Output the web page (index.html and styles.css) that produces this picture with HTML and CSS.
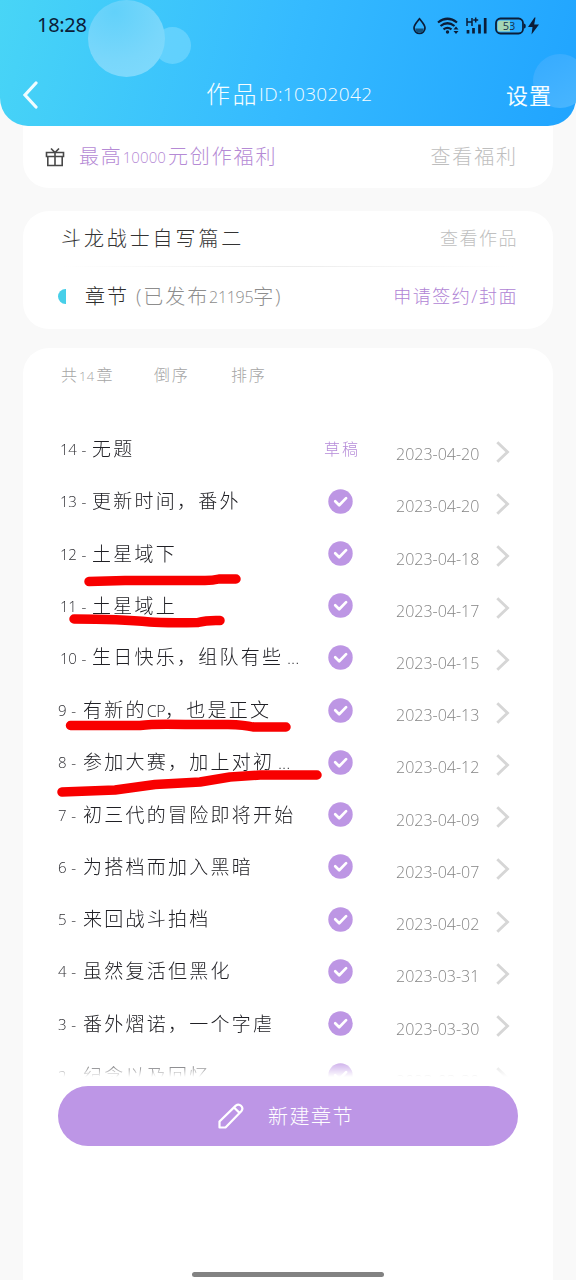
FILE: index.html
```html
<!DOCTYPE html>
<html lang="zh-CN">
<head>
<meta charset="utf-8">
<title>作品</title>
<link rel="stylesheet" href="styles.css">
</head>
<body>
<svg class="defs" width="0" height="0">
  <symbol id="check" viewBox="0 0 25 25"><circle cx="12.5" cy="12.5" r="12.2" fill="#bd96e4"/><path d="M7.200 12.300l4 4 6.900-7.200" fill="none" stroke="#fff" stroke-width="2.700" stroke-linecap="round" stroke-linejoin="round"/></symbol>
  <symbol id="arrow" viewBox="0 0 14 22"><path d="M1.300 1.300L11.500 11 1.300 20.700" fill="none" stroke="#d6d6d6" stroke-width="2.900"/></symbol>
</svg>
<div class="phone">
  <header class="header">
    <i class="bubble small"></i><i class="bubble big"></i><i class="bubble side"></i>
    <div class="status">
      <span class="clock">18:28</span>
      <svg class="status-icons" width="130" height="20" viewBox="0 0 130 20">
        <path d="M7.500 1.800C5 5 2 7.700 2 11a5.500 5.500 0 0 0 11 0C13 7.700 10 5 7.500 1.800z" fill="none" stroke="#0b1d38" stroke-width="1.700"/>
        <path d="M3.200 11.500h8.600a4.300 4.300 0 0 1-8.600 0z" fill="#13527d"/>
        <g fill="none" stroke="#0b1d38" stroke-width="2.200"><path d="M26 5.500Q35.500-2 45 5.500M28.500 9Q35.500 3.500 42.500 9M31.500 12.300Q35.500 9.500 39.500 12.300"/></g>
        <circle cx="35.500" cy="15" r="1.700" fill="#0b1d38"/><path d="M41.500 12.500l2.500-3 2.500 3zM41.500 14l2.500 3 2.500-3z" fill="#0b1d38"/>
        <path d="M55 1v8M60 1v8M55 5H60M61.200 3h5M63.700.500v5" stroke="#0b1d38" stroke-width="1.500"/>
        <path d="M56 13v3.500M61.500 11v5.500M67.500 7.500v9M73.200 1v15.500" stroke="#0b1d38" stroke-width="2.700"/>
        <rect x="84" y="1.500" width="27" height="15" rx="4.500" fill="none" stroke="#0b1d38" stroke-width="1.800"/>
        <path d="M88 3.500h10v11h-10a2.500 2.500 0 0 1-2.500-2.500V6a2.500 2.500 0 0 1 2.500-2.500z" fill="#a5d6b5"/>
        <path d="M112 6.500q1.800 0 1.800 2.500t-1.800 2.500z" fill="#0b1d38"/>
        <text x="97" y="13" text-anchor="middle" class="battery">53</text>
        <path d="M122.500.500l-6.500 9.500h4.500l-1 7.500 7.500-10h-4.800l1.300-7z" fill="#0b1d38"/>
      </svg>
    </div>
    <div class="nav">
      <svg width="17" height="28" viewBox="0 0 17 28"><path d="M15 2L4 14l11 12" fill="none" stroke="#effcff" stroke-width="3.200" stroke-linecap="round"/></svg>
      <h1 class="page-title">作品<span class="page-id">ID:10302042</span></h1>
      <span class="settings">设置</span>
    </div>
  </header>

  <section class="card benefit">
    <svg width="20" height="20" viewBox="0 0 20 20" fill="none" stroke="#484848" stroke-width="1.600"><path d="M1.500 5.500h17v4h-17zM2.800 9.500V18.500h14.400V9.500M10 5.500v13M6 1.500l4 4 4-4"/></svg>
    <span class="benefit-text">最高<span class="benefit-num">10000</span>元创作福利</span>
    <span class="benefit-link">查看福利</span>
  </section>

  <section class="card work">
    <div class="work-top"><span class="work-name">斗龙战士自写篇二</span><span class="work-link">查看作品</span></div>
    <div class="divider"></div>
    <div class="work-bottom">
      <i class="half"></i><span class="section-name">章节</span>
      <span class="published">(已发布<span class="published-num">21195</span>字)</span>
      <span class="apply">申请签约/封面</span>
    </div>
  </section>

  <section class="card chapters">
    <div class="tools"><span class="count">共<span class="count-num">14</span>章</span><span class="order">倒序</span><span>排序</span></div>
    <div class="list">
      <div class="row"><span class="num">14</span><span class="title">无题</span><span class="draft">草稿</span><time>2023-04-20</time><svg class="arrow"><use href="#arrow"/></svg></div>
      <div class="row"><span class="num">13</span><span class="title">更新时间，番外</span><svg class="check"><use href="#check"/></svg><time>2023-04-20</time><svg class="arrow"><use href="#arrow"/></svg></div>
      <div class="row"><span class="num">12</span><span class="title">土星域下</span><svg class="check"><use href="#check"/></svg><time>2023-04-18</time><svg class="arrow"><use href="#arrow"/></svg></div>
      <div class="row"><span class="num">11</span><span class="title">土星域上</span><svg class="check"><use href="#check"/></svg><time>2023-04-17</time><svg class="arrow"><use href="#arrow"/></svg></div>
      <div class="row"><span class="num">10</span><span class="title">生日快乐，组队有些<span class="dots">...</span></span><svg class="check"><use href="#check"/></svg><time>2023-04-15</time><svg class="arrow"><use href="#arrow"/></svg></div>
      <div class="row single"><span class="num">9</span><span class="title">有新的<span class="latin">CP</span>，也是正文</span><svg class="check"><use href="#check"/></svg><time>2023-04-13</time><svg class="arrow"><use href="#arrow"/></svg></div>
      <div class="row single"><span class="num">8</span><span class="title">参加大赛，加上对初<span class="dots">...</span></span><svg class="check"><use href="#check"/></svg><time>2023-04-12</time><svg class="arrow"><use href="#arrow"/></svg></div>
      <div class="row single"><span class="num">7</span><span class="title">初三代的冒险即将开始</span><svg class="check"><use href="#check"/></svg><time>2023-04-09</time><svg class="arrow"><use href="#arrow"/></svg></div>
      <div class="row single"><span class="num">6</span><span class="title">为搭档而加入黑暗</span><svg class="check"><use href="#check"/></svg><time>2023-04-07</time><svg class="arrow"><use href="#arrow"/></svg></div>
      <div class="row single"><span class="num">5</span><span class="title">来回战斗拍档</span><svg class="check"><use href="#check"/></svg><time>2023-04-02</time><svg class="arrow"><use href="#arrow"/></svg></div>
      <div class="row single"><span class="num">4</span><span class="title">虽然复活但黑化</span><svg class="check"><use href="#check"/></svg><time>2023-03-31</time><svg class="arrow"><use href="#arrow"/></svg></div>
      <div class="row single"><span class="num">3</span><span class="title">番外熠诺，一个字虐</span><svg class="check"><use href="#check"/></svg><time>2023-03-30</time><svg class="arrow"><use href="#arrow"/></svg></div>
      <div class="row single"><span class="num">2</span><span class="title">纪念以及回忆</span><svg class="check"><use href="#check"/></svg><time>2023-03-30</time><svg class="arrow"><use href="#arrow"/></svg></div>
    </div>
    <div class="create">
      <svg width="26" height="26" viewBox="0 0 26 26" fill="none" stroke="#fff" stroke-width="2.200" stroke-linejoin="round"><path d="M1.500 24.500V18.500L17.800 2.600Q20.500.400 23 2.700T23.500 8L7.500 24.500zM16 4.500l5.800 5.600"/></svg>
      <span>新建章节</span>
    </div>
  </section>
  <div class="home"></div>
  <svg class="marks" width="576" height="1280" viewBox="0 0 576 1280">
    <path d="M89 581.500L125 580.500H205Q213 580.500 219 579H236"/>
    <path d="M74 619Q120 619 150 622 162 623 198 622.500 207 620 220 620.500"/>
    <path d="M70.500 725.500H140Q155 723.500 185 724.500H228Q245 725 253 727H286"/>
    <path d="M62 792L115 790 155 784.500 200 782 230 777 260 775H317"/>
  </svg>
</div>
</body>
</html>
```
FILE: styles.css
```css
* { box-sizing: border-box; }
body { margin: 0; font-family: "Open Sans", "Noto Sans CJK SC", sans-serif; font-weight: 300; }
.defs { position: absolute; }
.phone { position: relative; width: 576px; height: 1280px; overflow: hidden; background: #f9f9f9; display: flex; flex-direction: column; align-items: center; white-space: nowrap; }
.header { position: relative; z-index: 1; width: 576px; height: 126px; flex: none; border-radius: 0 0 28px 28px; overflow: hidden; background: linear-gradient(105deg, #48d5f6 0%, #35baff 50%, #20a4ff 100%); color: #f5fdff; }
.bubble { position: absolute; border-radius: 50%; }
.big { left: 88px; top: 0; width: 77px; height: 77px; background: radial-gradient(circle at 35% 15%, #62d1fa 0%, #79d7fb 60%, #80dafd 100%); }
.small { left: 154px; top: 27px; width: 37px; height: 37px; background: rgba(150,226,255,.42); }
.side { left: 533px; top: 54px; width: 54px; height: 54px; background: linear-gradient(155deg, #36abff, #49b6ff); }
.status { position: relative; height: 50px; padding: 3px 34px 0 37px; display: flex; align-items: center; justify-content: space-between; color: #0b1d38; }
.clock { font: 400 20px/26px "Noto Sans", sans-serif; letter-spacing: -.300px; margin-top: -3px; }
.battery { font: 400 11px "Open Sans", sans-serif; fill: #17344d; }
.nav { position: relative; height: 62px; padding: 0 24px 0 21px; margin-top: 14px; display: grid; grid-template-columns: 185px 1fr 46px; align-items: center; }
.page-title { margin: 0; display: flex; align-items: center; font-size: 24px; font-weight: 300; letter-spacing: 2.500px; line-height: 36px; margin-top: -3px; }
.page-id { font-size: 19px; letter-spacing: .350px; }
.settings { font-size: 22px; letter-spacing: 1px; font-weight: 400; margin-top: -3px; }
.card { width: 530px; background: #fff; flex: none; }
.benefit { height: 62px; border-radius: 0 0 26px 26px; display: flex; align-items: center; padding: 0 35px 0 22px; color: #b58ad5; font-size: 20px; }
.benefit-text { margin-left: 14px; letter-spacing: 1.850px; margin-top: -3px; }
.benefit-num { font-size: 15px; letter-spacing: .1px; margin-right: 2px; vertical-align: 1px; }
.benefit-link { margin-left: auto; letter-spacing: 1.900px; color: #bebebe; margin-top: -3px; }
.work { margin-top: 23px; height: 118px; border-radius: 26px; padding: 0 35px; }
.work-top { height: 55px; padding: 0 0 3px 3px; display: flex; align-items: center; justify-content: space-between; }
.work-name { font-size: 20px; letter-spacing: 2.900px; color: #333; }
.work-link { font-size: 18px; letter-spacing: 1.500px; color: #c0c0c0; }
.divider { height: 1px; margin: 0 5px; background: linear-gradient(90deg, #fff, #ececec 50%, #fff); }
.work-bottom { height: 58px; display: flex; align-items: center; }
.work-bottom span { margin-top: -2px; }
.work-bottom .published-num { margin-top: 0; }
.half { width: 8px; height: 15px; border-radius: 8px 0 0 8px; background: #47cfe9; }
.section-name { margin-left: 19px; font-size: 20px; letter-spacing: 2px; color: #2e2e2e; }
.published { margin-left: 7px; font-size: 20px; letter-spacing: 1.900px; color: #8d8d8d; }
.published-num { font-size: 16px; letter-spacing: -.3px; vertical-align: 1px; }
.apply { margin-left: auto; font-size: 18px; letter-spacing: 1.500px; color: #b084d5; }
.chapters { margin-top: 19px; height: 932px; border-radius: 26px 26px 0 0; padding: 0 35px; }
.tools { height: 54px; padding: 0 0 2px 3px; display: flex; align-items: center; font-size: 16px; letter-spacing: 1.800px; color: #a5a5a5; }
.count { width: 93px; letter-spacing: 0; }
.count-num { font-size: 13px; letter-spacing: .3px; margin: 0 2px; }
.order { width: 77px; }
.list { height: 675px; padding-top: 21px; overflow: hidden; -webkit-mask-image: linear-gradient(#000 656px, transparent 675px); mask-image: linear-gradient(#000 656px, transparent 675px); }
.row { height: 52.220px; display: grid; grid-template-columns: 34px 225px 79px 100px 14px; align-items: center; color: #202025; }
.single { grid-template-columns: 25px 234px 79px 100px 14px; }
.num { font-size: 15px; letter-spacing: -.3px; padding-left: 2px; color: #303035; display: flex; }
.single .num { padding-left: 0; }
.num::after { content: "-"; margin-left: 5px; }
.title { font-size: 19px; letter-spacing: 2.250px; line-height: 28px; }
.latin { font-size: 16px; letter-spacing: -.5px; }
.dots { font-size: 15px; letter-spacing: .5px; margin-left: 4px; }
.draft { font-size: 16px; letter-spacing: 2px; color: #b58ad8; margin: -2px 0 0 7px; }
.check { width: 25px; height: 25px; margin-left: 11px; }
time { font-size: 16px; color: #858585; padding-top: 10px; line-height: 22px; }
.arrow { width: 14px; height: 22px; margin-top: 5px; }
.create { margin-top: 9px; width: 460px; height: 60px; border-radius: 30px; background: #bd96e6; color: #fff; display: flex; align-items: center; padding-left: 160px; gap: 24px; font-size: 20px; letter-spacing: 1.500px; }
.create span { margin-top: -2px; }
.home { position: absolute; left: 192px; bottom: 3px; width: 192px; height: 5px; border-radius: 3px; background: #828282; }
.marks { position: absolute; inset: 0; z-index: 2; fill: none; stroke: #f80000; stroke-width: 9.500px; stroke-linecap: round; stroke-linejoin: round; }
```
